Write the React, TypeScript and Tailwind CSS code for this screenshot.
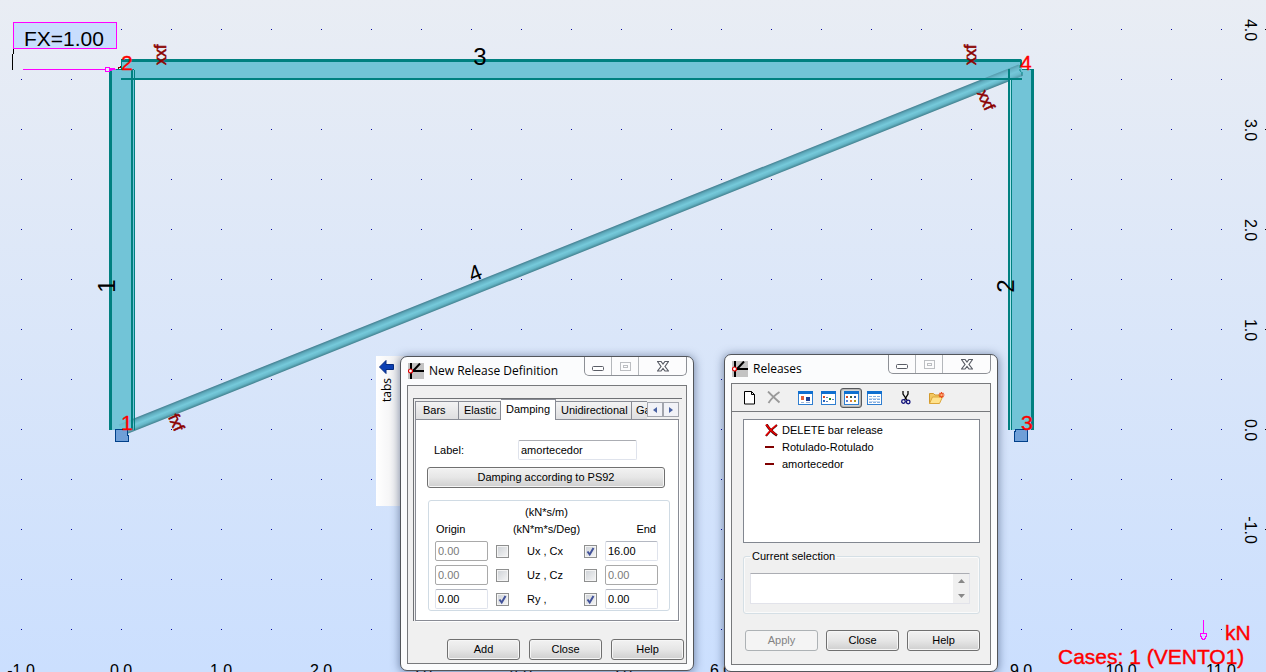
import type { ReactNode } from "react";
import clsx from "clsx";

const GRID_X = Array.from({ length: 25 }, (_, i) => 21 + i * 50);
const GRID_Y = Array.from({ length: 13 }, (_, i) => 29 + i * 50);

const X_LABELS = Array.from({ length: 13 }, (_, i) => ({
  x: 21 + i * 100,
  text: (i - 1).toFixed(1),
}));

const Y_LABELS = Array.from({ length: 6 }, (_, i) => ({
  y: 30 + i * 100,
  text: (4 - i).toFixed(1),
}));

/* ---------- Structural model view ---------- */

function ModelView() {
  return (
    <svg
      className="block h-screen w-full"
      fontFamily="'Liberation Sans', Arial, sans-serif"
      role="img"
      aria-label="Frame model"
    >
      <defs>
        <linearGradient id="brace" x1="0" y1="0" x2="0" y2="1">
          <stop offset="0" stopColor="#437f90" />
          <stop offset="0.2" stopColor="#5fabbd" />
          <stop offset="0.5" stopColor="#76cadb" />
          <stop offset="0.75" stopColor="#66b7c8" />
          <stop offset="1" stopColor="#42818f" />
        </linearGradient>
      </defs>

      <g fill="#0000a0" shapeRendering="crispEdges">
        {GRID_Y.map((y) =>
          GRID_X.map((x) => (
            <rect key={`${x}-${y}`} x={x} y={y} width="1" height="1" />
          )),
        )}
      </g>

      <g fill="#000" shapeRendering="crispEdges">
        {Y_LABELS.map(({ y }) => (
          <rect key={y} x="1265" y={y - 1} width="1" height="1" />
        ))}
      </g>

      {/* Bar fills, with bar 4 showing faintly through the others */}
      <g fill="#72c4d7" shapeRendering="crispEdges">
        <rect x="121" y="59" width="901" height="21" />
        <rect x="109" y="69" width="26" height="361" />
        <rect x="1010" y="69" width="24" height="361" />
      </g>
      <rect
        width="969"
        height="12"
        y="-6"
        fill="url(#brace)"
        transform="translate(121 430) rotate(-21.8)"
      />
      <g fill="#72c4d7" shapeRendering="crispEdges">
        <rect x="112" y="410" width="19" height="20" opacity="0.8" />
        <rect x="960" y="62" width="61" height="16" opacity="0.4" />
      </g>

      {/* Bar 3 */}
      <g fill="#008080" shapeRendering="crispEdges">
        <rect x="121" y="59" width="900" height="3" />
        <rect x="121" y="60" width="1" height="10" />
        <rect x="1020" y="60" width="2" height="6" />
        <rect x="121" y="78" width="901" height="2" />
      </g>

      {/* Bar 1 */}
      <g fill="#008080" shapeRendering="crispEdges">
        <rect x="109" y="69" width="3" height="361" />
        <rect x="131" y="69" width="2" height="361" />
        <rect x="134" y="70" width="1" height="360" />
        <rect x="109" y="69" width="25" height="1" />
      </g>

      {/* Bar 2 */}
      <g fill="#008080" shapeRendering="crispEdges">
        <rect x="1008" y="69" width="2" height="361" />
        <rect x="1010" y="80" width="1" height="350" fill="#a8e4ec" />
        <rect x="1011" y="80" width="1" height="350" />
        <rect x="1031" y="69" width="3" height="361" />
        <rect x="1022" y="69" width="12" height="1" />
      </g>
      <path
        d="M1020 65v6l2 1v3"
        fill="none"
        stroke="#008080"
        strokeWidth="1"
        strokeDasharray="3 1"
      />

      {/* Supports */}
      <g fill="#6f9fd8" stroke="#00408a" shapeRendering="crispEdges">
        <path d="M115.500 429.500h12v6h1v6h-13z" />
        <path d="M1015.500 429.500h12v12h-13v-10h1z" />
      </g>

      {/* Nodal force */}
      <g shapeRendering="crispEdges">
        <rect x="13.500" y="22.500" width="103" height="26" fill="#c8ddfd" stroke="#f0f" />
        <path d="M13.500 49v5M12.500 54v16" stroke="#000" />
        <path d="M23 69.500h83M110 69.500h6" stroke="#f0f" />
        <path d="M105.500 67.500h4v4h-4zM109 68.500h6M109 70.500h3" fill="none" stroke="#f0f" />
        <path d="M118.500 69v-2h2v-1" fill="none" stroke="#800000" />
      </g>
      <text x="24" y="46" fontSize="21">FX=1.00</text>

      {/* Bar numbers */}
      <g fontSize="24" textAnchor="middle">
        <text transform="translate(115 286) rotate(-90)">1</text>
        <text transform="translate(1014 286) rotate(-90)">2</text>
        <text x="480" y="65">3</text>
        <text transform="translate(478 280) rotate(-21.8)" fontSize="22">4</text>
      </g>

      {/* Node numbers */}
      <g fontSize="21" fill="#f00" stroke="#f00" strokeWidth="0.3">
        <text x="121" y="430">1</text>
        <text x="121" y="70">2</text>
        <text x="1021" y="430">3</text>
        <text x="1020" y="70">4</text>
      </g>

      {/* Release codes */}
      <g fontSize="16" fill="#8b0000" stroke="#8b0000" strokeWidth="0.6">
        <text transform="translate(166 65) rotate(-90)">xxf</text>
        <text transform="translate(976 65) rotate(-90)">xxf</text>
        <text transform="translate(168 417) rotate(66)">fxf</text>
        <text transform="translate(977 93) rotate(66)">xxf</text>
      </g>

      {/* Load unit and case */}
      <path
        d="M1203.500 620v13M1200.500 633.500h6v2l-2 4h-2l-2-4z"
        fill="none"
        stroke="#f0f"
        shapeRendering="crispEdges"
      />
      <g fontSize="21" fill="#f00" stroke="#f00" strokeWidth="0.4">
        <text x="1225" y="640">kN</text>
        <text x="1058" y="664">Cases: 1 (VENTO1)</text>
      </g>

      {/* Axis values */}
      <g fontSize="16" textAnchor="middle">
        {X_LABELS.map(({ x, text }) => (
          <text key={text} x={x} y="676">
            {text}
          </text>
        ))}
        {Y_LABELS.map(({ y, text }) => (
          <text key={text} transform={`translate(1245 ${y}) rotate(90)`}>
            {text}
          </text>
        ))}
      </g>
    </svg>
  );
}

/* ---------- Window chrome ---------- */

function ReleaseIcon() {
  return (
    <svg width="16" height="16" viewBox="0 0 16 16" aria-hidden="true">
      <rect width="16" height="16" fill="#c3c3c3" />
      <path d="M3 0v16M5 8h11M5 8l7-7.500" stroke="#000" strokeWidth="2" fill="none" />
      <circle cx="2.500" cy="8" r="2" fill="#fff" stroke="#e00000" strokeWidth="1.200" />
    </svg>
  );
}

function CaptionButtons() {
  const base = "flex items-center justify-center";
  return (
    <div className="flex h-[19px] overflow-hidden rounded-b-[5px] border border-t-0 border-[#8d9096] bg-[#fcfcfd]">
      <button
        type="button"
        aria-label="Minimize"
        className={clsx(base, "w-[27px] border-r border-[#b4b7bb] pt-1.5")}
      >
        <svg width="13" height="6" viewBox="0 0 13 6">
          <rect x="0.500" y="0.500" width="11" height="4" rx="1" fill="#fff" stroke="#5a5d66" />
        </svg>
      </button>
      <button
        type="button"
        aria-label="Maximize"
        disabled
        className={clsx(base, "w-[27px] border-r border-[#b4b7bb]")}
      >
        <svg width="11" height="9" viewBox="0 0 11 9" fill="none" stroke="#bcbec2">
          <rect x="0.500" y="0.500" width="10" height="8" />
          <rect x="3.500" y="3.500" width="4" height="2" />
        </svg>
      </button>
      <button type="button" aria-label="Close window" className={clsx(base, "w-[47px]")}>
        <svg width="12" height="11" viewBox="0 0 12 11">
          <path
            d="M0.500 0.500h3.500l2 2.500 2-2.500h3.500L8 5.500l3.500 4.500H8L6 7.500 4 10H0.500L4 5.500z"
            fill="#fff"
            stroke="#5a5d66"
            strokeWidth="1.200"
          />
        </svg>
      </button>
    </div>
  );
}

interface WindowProps {
  title: string;
  className: string;
  children: ReactNode;
}

function Window({ title, className, children }: WindowProps) {
  return (
    <section
      className={clsx(
        "absolute rounded-[7px] border border-[#53565b] bg-[#fbfcfd] px-1.5 pb-1.5 font-['Liberation_Sans',Arial,sans-serif] text-[11px] shadow-[0_1px_8px_1px_rgba(40,60,100,0.5)]",
        className,
      )}
    >
      <header className="flex h-7 items-start">
        <span className="mt-1.5 ml-px">
          <ReleaseIcon />
        </span>
        <h2 className="mt-1.5 ml-[5px] flex-1 font-['Open_Sans','Noto_Sans',sans-serif] text-[12px] leading-4 whitespace-nowrap">
          {title}
        </h2>
        <CaptionButtons />
      </header>
      <div className="border border-[#77797c] bg-[#f0f0f0]">{children}</div>
    </section>
  );
}

interface PushButtonProps {
  children: ReactNode;
  disabled?: boolean;
  wide?: boolean;
}

function PushButton({ children, disabled, wide }: PushButtonProps) {
  return (
    <button
      type="button"
      disabled={disabled}
      className={clsx(
        "h-[21px] rounded-[3px] border text-center leading-none",
        wide ? "w-[238px]" : "w-[73px]",
        disabled
          ? "border-[#adb2b5] bg-[#f4f4f4] text-[#838383]"
          : "border-[#707070] bg-linear-to-b from-[#f2f2f2] from-0% via-[#e6e6e6] via-50% to-[#cfcfcf] to-100% shadow-[inset_0_0_0_1px_#f6f6f6]",
      )}
    >
      {children}
    </button>
  );
}

/* ---------- New Release Definition ---------- */

const ROWS = [
  { name: "Ux , Cx", origin: "0.00", originOn: false, end: "16.00", endOn: true },
  { name: "Uz , Cz", origin: "0.00", originOn: false, end: "0.00", endOn: false },
  { name: "Ry ,", origin: "0.00", originOn: true, end: "0.00", endOn: true },
];

function ValueBox({ label, value, enabled }: { label: string; value: string; enabled: boolean }) {
  return (
    <input
      type="text"
      aria-label={label}
      defaultValue={value}
      disabled={!enabled}
      className={clsx(
        "h-5 w-full rounded-[2px] border bg-white px-0.5",
        enabled ? "border-[#dfe3ec] border-t-[#b4b8c2]" : "border-[#a9a9a9] text-[#7a7a7a]",
      )}
    />
  );
}

function TickBox({ label, checked }: { label: string; checked: boolean }) {
  return (
    <span className="grid h-[13px] w-[13px]">
      <input
        type="checkbox"
        aria-label={label}
        defaultChecked={checked}
        className="peer col-start-1 row-start-1 h-[13px] w-[13px] appearance-none border border-[#8e8f8f] bg-linear-to-br from-[#cdd1d6] to-[#f6f6f6] shadow-[inset_0_0_0_1px_#f4f4f4]"
      />
      <svg
        viewBox="0 0 13 13"
        className="pointer-events-none invisible col-start-1 row-start-1 h-[13px] w-[13px] peer-checked:visible"
      >
        <path d="M3.500 6.500l2.200 3L9.500 3" fill="none" stroke="#42529a" strokeWidth="2" />
      </svg>
    </span>
  );
}

function Tab({ children, className }: { children: ReactNode; className: string }) {
  return (
    <button
      type="button"
      role="tab"
      aria-selected={false}
      className={clsx(
        "h-[18px] border border-b-0 border-[#898c95] bg-linear-to-b from-[#f3f3f3] to-[#dedee0] text-left whitespace-nowrap",
        className,
      )}
    >
      {children}
    </button>
  );
}

function TabScroll({ label, path }: { label: string; path: string }) {
  return (
    <button
      type="button"
      aria-label={label}
      className="flex h-[15px] w-4 items-center justify-center border border-[#a2a5ad] bg-[#f1f2f7]"
    >
      <svg width="4" height="6" viewBox="0 0 4 6">
        <path d={path} fill="#4a62a3" />
      </svg>
    </button>
  );
}

function NewReleaseWindow() {
  return (
    <Window title="New Release Definition" className="top-[356px] left-[400px] w-[294px]">
      <div className="pt-3 pr-0.5 pb-[3px] pl-[5px]">
        <div className="mr-0.5 border-t border-l border-[#6f7175] pr-[3px] pl-px">
          <div role="tablist" className="flex h-5 items-end">
            <Tab className="w-11 pl-[7px]">Bars</Tab>
            <Tab className="w-[42px] border-l-0 pl-[5px]">Elastic</Tab>
            <button
              type="button"
              role="tab"
              aria-selected
              className="relative z-10 -mb-px h-[21px] w-[55px] border border-b-0 border-l-0 border-[#898c95] bg-white pb-0.5 whitespace-nowrap"
            >
              Damping
            </button>
            <Tab className="w-[76px] border-l-0 pl-[5px]">Unidirectional</Tab>
            <Tab className="min-w-0 flex-1 overflow-hidden border-x-0 pl-1">Gap</Tab>
            <div className="flex self-start pt-[3px]">
              <TabScroll label="Previous tabs" path="M4 0v6L0 3z" />
              <TabScroll label="Next tabs" path="M0 0v6l4-3z" />
            </div>
          </div>

          <div className="border border-[#898c95] bg-white pt-5 pr-2 pb-[9px] pl-[11px] shadow-[1px_1px_0_#fff]">
            <div className="flex items-center pl-[7px]">
              <label htmlFor="release-label" className="w-[84px]">
                Label:
              </label>
              <input
                id="release-label"
                type="text"
                defaultValue="amortecedor"
                className="h-5 w-[119px] rounded-[2px] border border-[#dfe3ec] border-t-[#abadb3] bg-white px-0.5"
              />
            </div>
            <div className="mt-[7px] mb-3 flex">
              <PushButton wide>Damping according to PS92</PushButton>
            </div>

            <div className="ml-px rounded-[3px] border border-[#d0dbe4] pt-[3px] pr-[11px] pb-px pl-1.5">
              <div className="mb-[3px] flex items-end justify-between leading-[17px]">
                <span className="w-[53px] pl-px">Origin</span>
                <span className="text-center">
                  (kN*s/m)
                  <br />
                  (kN*m*s/Deg)
                </span>
                <span className="w-[53px] pr-0.5 text-right">End</span>
              </div>
              <div className="grid gap-y-1">
                {ROWS.map((row) => (
                  <div key={row.name} className="grid grid-cols-[53px_13px_1fr_13px_53px] items-center gap-x-2">
                    <ValueBox label={`Origin ${row.name}`} value={row.origin} enabled={row.originOn} />
                    <TickBox label={`Origin ${row.name} on`} checked={row.originOn} />
                    <span className="pl-2.5">{row.name}</span>
                    <TickBox label={`End ${row.name} on`} checked={row.endOn} />
                    <ValueBox label={`End ${row.name}`} value={row.end} enabled={row.endOn} />
                  </div>
                ))}
              </div>
            </div>
          </div>
        </div>

        <div className="mt-[18px] flex justify-end gap-[9px]">
          <PushButton>Add</PushButton>
          <PushButton>Close</PushButton>
          <PushButton>Help</PushButton>
        </div>
      </div>
    </Window>
  );
}

/* ---------- Releases ---------- */

function ListFrame({ children }: { children: ReactNode }) {
  return (
    <svg width="15" height="14" viewBox="0 0 15 14" shapeRendering="crispEdges">
      <rect x="0.500" y="0.500" width="14" height="13" fill="#fff" stroke="#2f7ed0" />
      <rect x="0" y="0" width="15" height="3" fill="#0f6fd0" />
      {children}
    </svg>
  );
}

const TOOLS: { name: string; className: string; pressed?: boolean; icon: ReactNode }[] = [
  {
    name: "New",
    className: "w-6",
    icon: (
      <svg width="12" height="14" viewBox="0 0 12 14" fill="#fff" stroke="#000">
        <path d="M0.500 0.500h7l3 3v9.500h-10zM7.500 0.500v3h3" />
      </svg>
    ),
  },
  {
    name: "Delete",
    className: "w-6",
    icon: (
      <svg width="14" height="13" viewBox="0 0 14 13" fill="none" stroke="#999">
        <path d="M1 0.500l5 5 6.500 6M12.500 1C8 4 4 8 1.500 12" strokeWidth="1.800" />
      </svg>
    ),
  },
  {
    name: "Large icons",
    className: "ml-2 w-[22px]",
    icon: (
      <ListFrame>
        <rect x="3" y="5" width="3" height="4" fill="#e0603c" />
        <rect x="8" y="6" width="4" height="4" fill="#1c3f94" />
        <path d="M3 11.500h3M8 11.500h4" stroke="#9bb6dc" />
      </ListFrame>
    ),
  },
  {
    name: "Small icons",
    className: "w-6",
    icon: (
      <ListFrame>
        <rect x="2" y="5" width="2" height="2" fill="#d24b28" />
        <rect x="2" y="9" width="2" height="2" fill="#2b66c0" />
        <rect x="8" y="7" width="2" height="2" fill="#1a8a2c" />
        <path d="M5 6.500h2M5 10.500h2M11 8.500h2" stroke="#5a7fb8" />
      </ListFrame>
    ),
  },
  {
    name: "List",
    className: "w-[22px]",
    pressed: true,
    icon: (
      <ListFrame>
        <path d="M2 5h2v2h-2z" fill="#d24b28" />
        <path d="M6 5h2v2h-2z" fill="#3f5f3a" />
        <path d="M10 5h2v2h-2z" fill="#2b50a0" />
        <path d="M2 9h2v2h-2z" fill="#5b7fd0" />
        <path d="M6 9h2v2h-2z" fill="#e07a40" />
        <path d="M10 9h2v2h-2z" fill="#b09a20" />
      </ListFrame>
    ),
  },
  {
    name: "Details",
    className: "w-6",
    icon: (
      <ListFrame>
        <path d="M2 5.500h11M2 8.500h11M2 11.500h11" stroke="#85aee0" strokeDasharray="3 1" />
        <path d="M2 7.500h11M2 10.500h11" stroke="#c6daf2" />
      </ListFrame>
    ),
  },
  {
    name: "Cut",
    className: "ml-2 w-6",
    icon: (
      <svg width="10" height="14" viewBox="0 0 10 14" fill="none">
        <path d="M2 0v3l4 6M7 0v3L3.500 9" stroke="#000" strokeWidth="1.300" />
        <circle cx="2.500" cy="10.500" r="1.800" stroke="#10107a" strokeWidth="1.300" />
        <circle cx="7.200" cy="11" r="1.800" stroke="#10107a" strokeWidth="1.300" />
      </svg>
    ),
  },
  {
    name: "Open",
    className: "ml-[7px] w-6",
    icon: (
      <svg width="16" height="14" viewBox="0 0 16 14">
        <path d="M0.500 12.500v-10h4l1.500 1.500h5v3" fill="#f2c760" stroke="#d39a2c" />
        <path d="M0.500 12.500l3-6.500h10l-3 6.500z" fill="#ffe28c" stroke="#dca63a" />
        <path d="M12.500 1v6M9.500 4h6M10.500 2l4 4M14.500 2l-4 4" stroke="#e8481c" strokeWidth="1.200" />
        <circle cx="12.500" cy="4" r="1.200" fill="#ffb070" />
      </svg>
    ),
  },
];

function Minus() {
  return (
    <svg width="13" height="13" viewBox="0 0 13 13" aria-hidden="true">
      <path d="M0 6h9" stroke="#800000" strokeWidth="2" />
    </svg>
  );
}

const RELEASES = [
  {
    name: "DELETE bar release",
    icon: (
      <svg width="13" height="13" viewBox="0 0 13 13" fill="none" aria-hidden="true">
        <path d="M1.500 0.500C4 5 7 8 12 11.500" stroke="#400000" strokeWidth="2.600" />
        <path d="M12 1C8 4 4 8 1 12" stroke="#400000" strokeWidth="2" />
        <path d="M1 0.500C4 4.500 7 8 11.500 11M11.500 1C7.500 4 4 7.500 1 11.500" stroke="#f00000" strokeWidth="1.500" />
      </svg>
    ),
  },
  { name: "Rotulado-Rotulado", icon: <Minus /> },
  { name: "amortecedor", icon: <Minus /> },
];

function ReleasesWindow() {
  return (
    <Window title="Releases" className="top-[354px] left-[724px] w-[274px]">
      <div role="toolbar" className="flex h-7 items-center border-b border-[#77797c] bg-[#f0f0f0] pl-1.5">
        {TOOLS.map((tool) => (
          <button
            key={tool.name}
            type="button"
            aria-label={tool.name}
            aria-pressed={tool.pressed}
            className={clsx(
              "flex h-5 items-center justify-center",
              tool.className,
              tool.pressed && "rounded-[3px] border border-[#55585c] bg-[#dcdcdc] shadow-[inset_0_0_2px_#555]",
            )}
          >
            {tool.icon}
          </button>
        ))}
      </div>

      <div className="pt-[7px] pr-2.5 pb-[13px] pl-[11px]">
        <ul className="h-[124px] border border-[#828790] bg-white pt-0.5 pl-[21px]">
          {RELEASES.map((release) => (
            <li key={release.name} className="flex h-[17px] items-center gap-1">
              {release.icon}
              {release.name}
            </li>
          ))}
        </ul>

        <fieldset className="mt-[7px] rounded-[3px] border border-[#d5dfe5] pt-[11px] pr-[9px] pb-[9px] pl-1.5 shadow-[inset_0_0_0_1px_#fafafa]">
          <legend className="px-0.5 leading-3">
            <label htmlFor="current-selection">Current selection</label>
          </legend>
          <div className="flex h-[31px] border border-[#e2e3ea] border-t-[#abadb3] bg-white">
            <textarea
              id="current-selection"
              className="h-full min-w-0 flex-1 resize-none overflow-hidden bg-transparent"
            />
            <div className="flex w-4 flex-col items-center justify-around bg-[#f0f0f0]">
              <svg width="7" height="4" viewBox="0 0 7 4">
                <path d="M0 4l3.500-4L7 4z" fill="#888" />
              </svg>
              <svg width="7" height="4" viewBox="0 0 7 4">
                <path d="M0 0l3.500 4L7 0z" fill="#888" />
              </svg>
            </div>
          </div>
        </fieldset>

        <div className="mt-4 flex justify-end gap-2">
          <PushButton disabled>Apply</PushButton>
          <PushButton>Close</PushButton>
          <PushButton>Help</PushButton>
        </div>
      </div>
    </Window>
  );
}

export default function App() {
  return (
    <main className="relative min-h-screen w-full overflow-hidden bg-linear-to-b from-[#e9edf4] to-[#cbdffe]">
      <ModelView />

      <button
        type="button"
        className="absolute top-[356px] left-[376px] flex h-[150px] w-7 flex-col items-start bg-linear-to-r from-white to-[#ececee] pt-1 pl-[3px]"
      >
        <svg width="15" height="14" viewBox="0 0 15 14" aria-hidden="true">
          <path d="M0.500 7L7 0.500V4.500h7.500v5H7v4z" fill="#0b3fb4" stroke="#062a80" />
        </svg>
        <span className="mt-1 rotate-180 font-['Open_Sans','Noto_Sans',sans-serif] text-[12px] leading-4 [writing-mode:vertical-rl]">
          tabs
        </span>
      </button>

      <NewReleaseWindow />
      <ReleasesWindow />
    </main>
  );
}
